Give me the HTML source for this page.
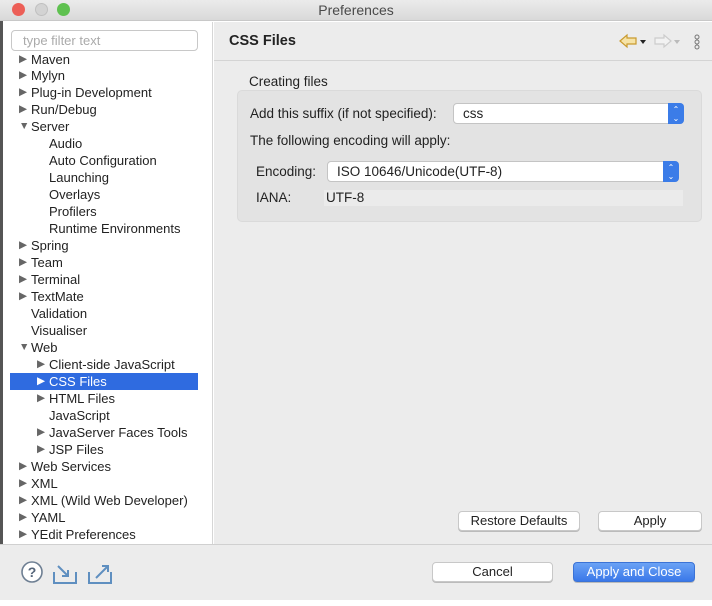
<!DOCTYPE html>
<html><head><style>
*{margin:0;padding:0;box-sizing:border-box}
body{width:712px;height:606px;background:#fff;font-family:"Liberation Sans",sans-serif;font-size:13px;color:#222;position:relative;overflow:hidden}
.abs{position:absolute}
#title{left:0;top:0;width:712px;height:21px;background:linear-gradient(#ebebeb,#d9d9d9);border-bottom:1px solid #c8c8c8;text-align:center;font-size:14px;line-height:20px;color:#4a4a4a}
.dot{top:3px;width:13px;height:13px;border-radius:50%}
#left{left:3px;top:22px;width:210px;height:522px;background:#fff;border-right:1px solid #d6d6d6}
#right{left:214px;top:22px;width:498px;height:522px;background:#ececec}
#bottom{left:0;top:544px;width:712px;height:56px;background:#ececec;border-top:1px solid #d0d0d0}
.row{position:absolute;height:17px;line-height:17px;white-space:nowrap}
.tri{display:inline-block;width:12px;font-size:10.5px;color:#666;vertical-align:top}
.btn{position:absolute;background:#fff;border:1px solid #c8c8c8;border-radius:4px;text-align:center;height:20px;line-height:18px;font-size:13px;box-shadow:0 1px 0 #bbb}
.sel{position:absolute;background:#fff;border:1px solid #c4c4c4;border-radius:4px;height:21px;line-height:19px;padding-left:9px}
.sel .a{position:absolute;right:-1px;top:-1px;width:16px;height:21px;background:#3b7ce8;border-radius:0 4px 4px 0;color:#fff;font-size:8px;line-height:9px;text-align:center;padding-top:2px}
.r{font-size:13.5px}
</style></head><body>
<div class="abs" style="left:0;top:0;width:3px;height:600px;background:#555"></div>
<div id="title" class="abs">Preferences</div>
<div class="abs dot" style="left:12px;background:#ec5f57"></div>
<div class="abs dot" style="left:35px;background:#d3d3d3;border:1px solid #c0c0c0"></div>
<div class="abs dot" style="left:57px;background:#5fc150"></div>
<div id="left" class="abs"></div>
<div class="abs" style="left:11px;top:30px;width:187px;height:21px;border:1px solid #c8c8c8;border-radius:4px;background:#fff;color:#aaa;font-size:13px;line-height:19px;padding-left:11px">type filter text</div>
<div class="abs" style="left:10px;top:373px;width:188px;height:17px;background:#2f6be0"></div>
<div class="row" style="left:19px;top:51px"><span class="tri">▶</span>Maven</div>
<div class="row" style="left:19px;top:67px"><span class="tri">▶</span>Mylyn</div>
<div class="row" style="left:19px;top:84px"><span class="tri">▶</span>Plug-in Development</div>
<div class="row" style="left:19px;top:101px"><span class="tri">▶</span>Run/Debug</div>
<div class="row" style="left:19px;top:118px"><span class="tri">▼</span>Server</div>
<div class="row" style="left:49px;top:135px">Audio</div>
<div class="row" style="left:49px;top:152px">Auto Configuration</div>
<div class="row" style="left:49px;top:169px">Launching</div>
<div class="row" style="left:49px;top:186px">Overlays</div>
<div class="row" style="left:49px;top:203px">Profilers</div>
<div class="row" style="left:49px;top:220px">Runtime Environments</div>
<div class="row" style="left:19px;top:237px"><span class="tri">▶</span>Spring</div>
<div class="row" style="left:19px;top:254px"><span class="tri">▶</span>Team</div>
<div class="row" style="left:19px;top:271px"><span class="tri">▶</span>Terminal</div>
<div class="row" style="left:19px;top:288px"><span class="tri">▶</span>TextMate</div>
<div class="row" style="left:31px;top:305px">Validation</div>
<div class="row" style="left:31px;top:322px">Visualiser</div>
<div class="row" style="left:19px;top:339px"><span class="tri">▼</span>Web</div>
<div class="row" style="left:37px;top:356px"><span class="tri">▶</span>Client-side JavaScript</div>
<div class="row" style="left:37px;top:373px;color:#fff"><span class="tri" style="color:#fff">▶</span>CSS Files</div>
<div class="row" style="left:37px;top:390px"><span class="tri">▶</span>HTML Files</div>
<div class="row" style="left:49px;top:407px">JavaScript</div>
<div class="row" style="left:37px;top:424px"><span class="tri">▶</span>JavaServer Faces Tools</div>
<div class="row" style="left:37px;top:441px"><span class="tri">▶</span>JSP Files</div>
<div class="row" style="left:19px;top:458px"><span class="tri">▶</span>Web Services</div>
<div class="row" style="left:19px;top:475px"><span class="tri">▶</span>XML</div>
<div class="row" style="left:19px;top:492px"><span class="tri">▶</span>XML (Wild Web Developer)</div>
<div class="row" style="left:19px;top:509px"><span class="tri">▶</span>YAML</div>
<div class="row" style="left:19px;top:526px"><span class="tri">▶</span>YEdit Preferences</div>

<div id="right" class="abs"></div>
<div class="abs" style="left:229px;top:33px;font-size:14.5px;font-weight:bold">CSS Files</div>
<div class="abs" style="left:214px;top:60px;width:498px;height:1px;background:#d4d4d4"></div>
<svg class="abs" style="left:618px;top:33px" width="90" height="18">
<path d="M2 8 L9 2 L9 5 L18 5 L18 11 L9 11 L9 14 Z" fill="#f6e3a6" stroke="#c99a2e" stroke-width="1.2"/>
<path d="M22 7 L28 7 L25 11Z" fill="#222"/>
<path d="M53 8 L46 2 L46 5 L37 5 L37 11 L46 11 L46 14 Z" fill="#f2f2f2" stroke="#ccc" stroke-width="1.2"/>
<path d="M56 7 L62 7 L59 11Z" fill="#bbb"/>
<circle cx="79" cy="4" r="2" fill="none" stroke="#777"/><circle cx="79" cy="9" r="2" fill="none" stroke="#777"/><circle cx="79" cy="14" r="2" fill="none" stroke="#777"/>
</svg>
<div class="abs r" style="left:249px;top:74px">Creating files</div>
<div class="abs" style="left:237px;top:90px;width:465px;height:132px;background:#e3e3e3;border-radius:5px;border:1px solid #dadada"></div>
<div class="abs r" style="left:250px;top:106px">Add this suffix (if not specified):</div>
<div class="sel r" style="left:453px;top:103px;width:231px">css<div class="a">⌃<br>⌄</div></div>
<div class="abs r" style="left:250px;top:133px">The following encoding will apply:</div>
<div class="abs r" style="left:256px;top:164px">Encoding:</div>
<div class="sel r" style="left:327px;top:161px;width:352px">ISO 10646/Unicode(UTF-8)<div class="a">⌃<br>⌄</div></div>
<div class="abs" style="left:324px;top:190px;width:359px;height:16px;background:#ebebeb"></div>
<div class="abs r" style="left:256px;top:190px">IANA:</div>
<div class="abs r" style="left:326px;top:190px">UTF-8</div>
<div class="btn" style="left:458px;top:511px;width:122px">Restore Defaults</div>
<div class="btn" style="left:598px;top:511px;width:104px">Apply</div>

<div id="bottom" class="abs"></div>
<svg class="abs" style="left:20px;top:560px" width="95" height="26">
<circle cx="12" cy="12" r="10" fill="#fff" stroke="#6e7f93" stroke-width="1.6"/>
<text x="12" y="17" font-size="14" font-family="Liberation Sans" text-anchor="middle" fill="#55657a" font-weight="bold">?</text>
<path d="M34 12 L34 23 L56 23 L56 12" fill="none" stroke="#5f8fc0" stroke-width="2"/>
<path d="M38 6 L48 16 M42 16 L48 16 L48 10" fill="none" stroke="#5f8fc0" stroke-width="2"/>
<path d="M69 12 L69 23 L91 23 L91 12" fill="none" stroke="#5f8fc0" stroke-width="2"/>
<path d="M76 18 L88 6 M82 6 L88 6 L88 12" fill="none" stroke="#5f8fc0" stroke-width="2"/>
</svg>
<div class="btn" style="left:432px;top:562px;width:121px">Cancel</div>
<div class="btn" style="left:573px;top:562px;width:122px;background:linear-gradient(#6aa2f5,#3a78e9);color:#fff;border-color:#3b73d6">Apply and Close</div>
</body></html>
